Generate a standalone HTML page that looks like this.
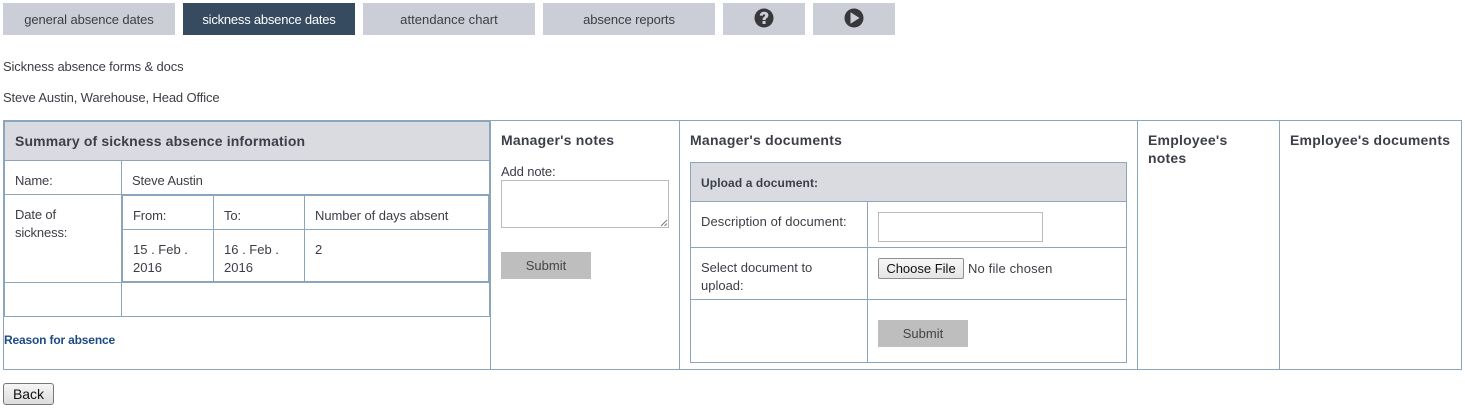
<!DOCTYPE html>
<html><head><meta charset="utf-8"><style>
html,body{margin:0;padding:0;background:#fff;width:1465px;height:408px;overflow:hidden}
body{position:relative;font-family:"Liberation Sans",sans-serif;font-size:13px;color:#3d3d45}
.t{position:absolute;white-space:nowrap;line-height:18px;letter-spacing:-.13px;margin-top:1px}
.l{position:absolute;background:#8ba6bc}
.b{position:absolute;background:#cbced6;height:32px;top:3px;text-align:center;line-height:33px;font-size:13px;letter-spacing:-.1px}
.h{position:absolute;white-space:nowrap;font-weight:bold;font-size:14px;line-height:18px;color:#3c3f48;letter-spacing:.22px}
.s{position:absolute;background:#bebebe;width:90px;height:27px;text-align:center;line-height:27px;font-size:13px;color:#444}
</style></head><body>
<div class="b" style="left:3px;width:172px">general absence dates</div>
<div class="b" style="left:183px;width:172px;background:#364b60;color:#fff;letter-spacing:-.22px">sickness absence dates</div>
<div class="b" style="left:363px;width:172px;letter-spacing:.05px">attendance chart</div>
<div class="b" style="left:543px;width:172px">absence reports</div>
<div class="b" style="left:723px;width:82px"><svg width="20" height="20" viewBox="0 0 20 20" style="position:absolute;left:31px;top:5px"><circle cx="10" cy="10" r="9.500" fill="#38383c"/><path d="M5.800 7.600C6 5 7.800 3.800 10.200 3.800c2.500 0 4.200 1.400 4.200 3.500 0 2.800-2.800 2.900-2.800 4.700H8.500c0-3.100 2.700-3.200 2.700-4.600 0-.6-.4-1-1.100-1-.8 0-1.200.5-1.400 1.400z" fill="#cbced6"/><rect x="8.500" y="13" width="3.100" height="3" fill="#cbced6"/></svg></div>
<div class="b" style="left:813px;width:82px"><svg width="20" height="20" viewBox="0 0 20 20" style="position:absolute;left:31px;top:5px"><circle cx="10" cy="10" r="9.500" fill="#38383c"/><path d="M6.500 4.300v11.400l9-5.700z" fill="#cbced6"/></svg></div>

<div class="t" style="left:3px;top:57px">Sickness absence forms &amp; docs</div>
<div class="t" style="left:3px;top:88px">Steve Austin, Warehouse, Head Office</div>

<!-- outer table -->
<div class="l" style="left:3px;top:120px;width:1459px;height:1px"></div>
<div class="l" style="left:3px;top:369px;width:1459px;height:1px"></div>
<div class="l" style="left:3px;top:120px;width:1px;height:250px"></div>
<div class="l" style="left:490px;top:120px;width:1px;height:250px"></div>
<div class="l" style="left:679px;top:120px;width:1px;height:250px"></div>
<div class="l" style="left:1137px;top:120px;width:1px;height:250px"></div>
<div class="l" style="left:1279px;top:120px;width:1px;height:250px"></div>
<div class="l" style="left:1461px;top:120px;width:1px;height:250px"></div>

<!-- summary -->
<div style="position:absolute;left:5px;top:122px;width:484px;height:38px;background:#d9dbe0"></div>
<div class="l" style="left:3px;top:121px;width:488px;height:1px"></div>
<div class="l" style="left:4px;top:120px;width:1px;height:197px"></div>
<div class="l" style="left:489px;top:120px;width:1px;height:197px"></div>
<div class="l" style="left:4px;top:160px;width:486px;height:1px"></div>
<div class="l" style="left:4px;top:194px;width:486px;height:1px"></div>
<div class="l" style="left:4px;top:282px;width:486px;height:1px"></div>
<div class="l" style="left:4px;top:316px;width:486px;height:1px"></div>
<div class="l" style="left:121px;top:160px;width:1px;height:156px"></div>
<div class="l" style="left:122px;top:194px;width:1px;height:88px"></div>
<div class="l" style="left:488px;top:194px;width:1px;height:88px"></div>
<div class="l" style="left:122px;top:195px;width:367px;height:1px"></div>
<div class="l" style="left:122px;top:281px;width:367px;height:1px"></div>
<div class="l" style="left:122px;top:229px;width:367px;height:1px"></div>
<div class="l" style="left:213px;top:195px;width:1px;height:87px"></div>
<div class="l" style="left:304px;top:195px;width:1px;height:87px"></div>

<div class="h" style="left:15px;top:132px;letter-spacing:.14px">Summary of sickness absence information</div>
<div class="t" style="left:15px;top:171px">Name:</div>
<div class="t" style="left:132px;top:171px">Steve Austin</div>
<div class="t" style="left:15px;top:205px">Date of<br>sickness:</div>
<div class="t" style="left:133px;top:206px">From:</div>
<div class="t" style="left:224px;top:206px">To:</div>
<div class="t" style="left:315px;top:206px;letter-spacing:-.05px">Number of days absent</div>
<div class="t" style="left:133px;top:240px;letter-spacing:0">15 . Feb .<br>2016</div>
<div class="t" style="left:224px;top:240px;letter-spacing:0">16 . Feb .<br>2016</div>
<div class="t" style="left:315px;top:240px">2</div>
<div class="t" style="left:4px;top:330px;font-weight:bold;font-size:12px;color:#1c4a85;letter-spacing:-.17px">Reason for absence</div>

<!-- manager notes -->
<div class="h" style="left:501px;top:131px">Manager's notes</div>
<div class="t" style="left:501px;top:162px">Add note:</div>
<div style="position:absolute;left:501px;top:180px;width:166px;height:46px;border:1px solid #bbb"><svg width="8" height="8" style="position:absolute;right:0;bottom:0"><path d="M1 7L7 1M4.500 7L7 4.500" stroke="#777" stroke-width="1"/></svg></div>
<div class="s" style="left:501px;top:252px">Submit</div>

<!-- manager docs -->
<div class="h" style="left:690px;top:131px;letter-spacing:.26px">Manager's documents</div>
<div style="position:absolute;left:691px;top:163px;width:435px;height:38px;background:#d9dbe0"></div>
<div class="l" style="left:690px;top:162px;width:437px;height:1px"></div>
<div class="l" style="left:690px;top:201px;width:437px;height:1px"></div>
<div class="l" style="left:690px;top:247px;width:437px;height:1px"></div>
<div class="l" style="left:690px;top:299px;width:437px;height:1px"></div>
<div class="l" style="left:690px;top:362px;width:437px;height:1px"></div>
<div class="l" style="left:690px;top:162px;width:1px;height:201px"></div>
<div class="l" style="left:1126px;top:162px;width:1px;height:201px"></div>
<div class="l" style="left:867px;top:201px;width:1px;height:161px"></div>
<div class="t" style="left:701px;top:173px;font-weight:bold;font-size:12px;color:#3c3f48;letter-spacing:.1px">Upload a document:</div>
<div class="t" style="left:701px;top:212px;letter-spacing:.08px">Description of document:</div>
<div class="t" style="left:701px;top:258px;letter-spacing:0">Select document to<br>upload:</div>
<div style="position:absolute;left:878px;top:212px;width:163px;height:28px;border:1px solid #bbb"></div>
<div style="position:absolute;box-sizing:border-box;left:878px;top:258px;width:86px;height:21px;border:1px solid #8f8f8f;border-radius:2px;background:linear-gradient(#f8f8f8,#e4e4e4);text-align:center;line-height:19px;font-size:13px;color:#111">Choose File</div>
<div class="t" style="left:968px;top:259px;letter-spacing:.15px">No file chosen</div>
<div class="s" style="left:878px;top:320px">Submit</div>

<!-- employee -->
<div class="h" style="left:1148px;top:131px">Employee's<br>notes</div>
<div class="h" style="left:1290px;top:131px">Employee's documents</div>

<div style="position:absolute;box-sizing:border-box;left:3px;top:383px;width:51px;height:22px;border:1px solid #777;border-radius:3px;background:linear-gradient(#f6f6f6,#dcdcdc);text-align:center;line-height:20px;font-size:14px;color:#111">Back</div>
</body></html>
